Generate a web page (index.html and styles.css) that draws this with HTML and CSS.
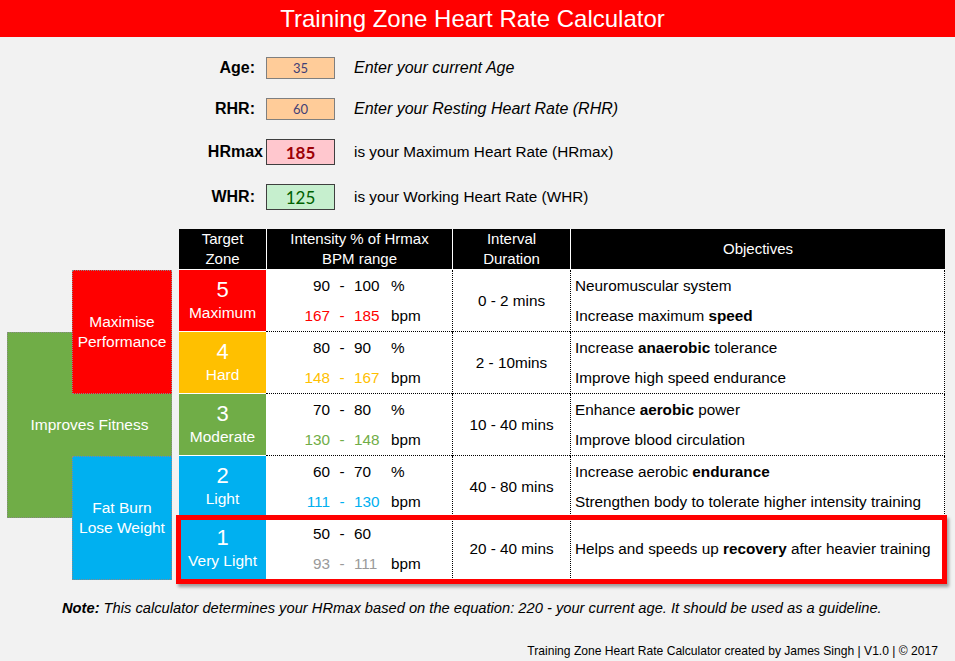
FILE: index.html
```html
<!DOCTYPE html>
<html lang="en">
<head>
<meta charset="utf-8">
<title>Training Zone Heart Rate Calculator</title>
<link rel="stylesheet" href="styles.css">
</head>
<body>
<header class="title-bar"><h1>Training Zone Heart Rate Calculator</h1></header>

<section class="inputs">
  <div class="in-row short">
    <span class="in-label">Age:</span>
    <span class="in-box entry">35</span>
    <span class="in-desc hint">Enter your current Age</span>
  </div>
  <div class="in-row short">
    <span class="in-label">RHR:</span>
    <span class="in-box entry">60</span>
    <span class="in-desc hint">Enter your Resting Heart Rate (RHR)</span>
  </div>
  <div class="in-row tall">
    <span class="in-label wide">HRmax</span>
    <span class="in-box bad">185</span>
    <span class="in-desc">is your Maximum Heart Rate (HRmax)</span>
  </div>
  <div class="in-row tall">
    <span class="in-label">WHR:</span>
    <span class="in-box good">125</span>
    <span class="in-desc">is your Working Heart Rate (WHR)</span>
  </div>
</section>

<section class="zones">
  <div class="groups">
    <div class="grp grp-max">Maximise<br>Performance</div>
    <div class="grp grp-fit">Improves Fitness</div>
    <div class="grp grp-fat">Fat Burn<br>Lose Weight</div>
  </div>

  <div class="ztable">
    <div class="th">Target<br>Zone</div>
    <div class="th sep">Intensity % of Hrmax<br>BPM range</div>
    <div class="th sep">Interval<br>Duration</div>
    <div class="th sep">Objectives</div>

    <div class="zone z5"><span class="zn">5</span><span class="zl">Maximum</span></div>
    <div class="inten c5">
      <span class="n1">90</span><span class="d">-</span><span class="n2">100</span><span class="u">%</span>
      <span class="n1 col">167</span><span class="d col">-</span><span class="n2 col">185</span><span class="u">bpm</span>
    </div>
    <div class="interval">0 - 2 mins</div>
    <div class="obj"><span>Neuromuscular system</span><span>Increase maximum <b>speed</b></span></div>

    <div class="zone z4"><span class="zn">4</span><span class="zl">Hard</span></div>
    <div class="inten c4">
      <span class="n1">80</span><span class="d">-</span><span class="n2">90</span><span class="u">%</span>
      <span class="n1 col">148</span><span class="d col">-</span><span class="n2 col">167</span><span class="u">bpm</span>
    </div>
    <div class="interval">2 - 10mins</div>
    <div class="obj"><span>Increase <b>anaerobic</b> tolerance</span><span>Improve high speed endurance</span></div>

    <div class="zone z3"><span class="zn">3</span><span class="zl">Moderate</span></div>
    <div class="inten c3">
      <span class="n1">70</span><span class="d">-</span><span class="n2">80</span><span class="u">%</span>
      <span class="n1 col">130</span><span class="d col">-</span><span class="n2 col">148</span><span class="u">bpm</span>
    </div>
    <div class="interval">10 - 40 mins</div>
    <div class="obj"><span>Enhance <b>aerobic</b> power</span><span>Improve blood circulation</span></div>

    <div class="zone z2"><span class="zn">2</span><span class="zl">Light</span></div>
    <div class="inten c2">
      <span class="n1">60</span><span class="d">-</span><span class="n2">70</span><span class="u">%</span>
      <span class="n1 col">111</span><span class="d col">-</span><span class="n2 col">130</span><span class="u">bpm</span>
    </div>
    <div class="interval">40 - 80 mins</div>
    <div class="obj"><span>Increase aerobic <b>endurance</b></span><span>Strengthen body to tolerate higher intensity training</span></div>

    <div class="zone z1"><span class="zn">1</span><span class="zl">Very Light</span></div>
    <div class="inten c1">
      <span class="n1">50</span><span class="d">-</span><span class="n2">60</span><span class="u"></span>
      <span class="n1 col">93</span><span class="d col">-</span><span class="n2 col">111</span><span class="u">bpm</span>
    </div>
    <div class="interval">20 - 40 mins</div>
    <div class="obj single"><span>Helps and speeds up <b>recovery</b> after heavier training</span></div>

    <div class="highlight"></div>
  </div>
</section>

<p class="note"><b>Note:</b> This calculator determines your HRmax based on the equation: 220 - your current age. It should be used as a guideline.</p>
<p class="credit">Training Zone Heart Rate Calculator created by James Singh | V1.0 | © 2017</p>
</body>
</html>
```

FILE: styles.css
```css
* { box-sizing: border-box; }
html, body { margin: 0; padding: 0; }
body {
  width: 955px;
  height: 661px;
  background: #f2f2f2;
  font-family: "Liberation Sans", Arial, sans-serif;
  color: #000;
  overflow: hidden;
}

.title-bar {
  height: 37px;
  background: #ff0000;
  display: flex;
  align-items: center;
  justify-content: center;
  padding-right: 10px;
}
.title-bar h1 {
  margin: 0;
  font-weight: normal;
  font-size: 24px;
  color: #fff;
  line-height: 37px;
}

/* inputs */
.inputs {
  padding-top: 20px;
  padding-left: 185px;
  display: flex;
  flex-direction: column;
  gap: 19px;
}
.in-row {
  display: flex;
  align-items: center;
}
.in-row.short { height: 22px; }
.in-row.tall { height: 26px; }
.in-label {
  width: 70px;
  text-align: right;
  font-weight: bold;
  font-size: 16px;
  white-space: nowrap;
}
.in-label.wide { width: 78px; }
.in-box {
  margin-left: 11px;
  width: 69px;
  height: 100%;
  display: flex;
  align-items: center;
  justify-content: center;
  font-family: Lato, "Open Sans", sans-serif;
  border: 1px solid #7f7f7f;
}
.in-label.wide + .in-box { margin-left: 3px; }
.entry { background: #ffcc99; color: #3f3f76; font-size: 13px; }
.bad { background: #ffc7ce; color: #9c0006; font-size: 17px; font-weight: bold; border-color: #3f3f3f; }
.good { background: #c6efce; color: #006100; font-size: 17px; border-color: #3f3f3f; }
.in-desc {
  margin-left: 19px;
  font-size: 15.3px;
  white-space: nowrap;
}
.hint { font-style: italic; font-size: 16px; }

/* zones */
.zones {
  margin-top: 19px;
  display: flex;
  align-items: flex-start;
  padding-left: 7px;
  gap: 7px;
}
.groups {
  margin-top: 41px;
  display: grid;
  grid-template-columns: 65px 100px;
  grid-template-rows: 62px 62px 62px 62px 62px;
  color: #fff;
  font-size: 15.5px;
  line-height: 20px;
  text-align: center;
}
.grp {
  display: flex;
  align-items: center;
  justify-content: center;
  border: 1px dotted #8a8a8a;
}
.grp-max { grid-column: 2; grid-row: 1 / 3; background: #ff0000; z-index: 2; }
.grp-fit { grid-column: 1 / 3; grid-row: 2 / 5; background: #70ad47; z-index: 1; }
.grp-fat { grid-column: 2; grid-row: 4 / 6; background: #00b0f0; z-index: 2; }

.ztable {
  position: relative;
  display: grid;
  grid-template-columns: 87px 186px 118px 375px;
  grid-template-rows: 41px repeat(5, 62px);
  font-size: 15.3px;
}
.th {
  background: #000;
  color: #fff;
  text-align: center;
  line-height: 20px;
  display: flex;
  align-items: center;
  justify-content: center;
  border-bottom: 1px solid #fff;
  font-size: 15px;
}
.th.sep { border-left: 1px solid #fff; }

.zone {
  display: flex;
  flex-direction: column;
  align-items: center;
  justify-content: center;
  color: #fff;
  border-bottom: 1px solid #fff;
}
.zn { font-size: 22px; line-height: 24px; }
.zl { font-size: 15.5px; line-height: 22px; }
.z5 { background: #ff0000; }
.z4 { background: #ffc000; }
.z3 { background: #70ad47; }
.z2, .z1 { background: #00b0f0; }

.inten, .interval, .obj {
  background: #fff;
  border-bottom: 1px dotted #000;
}
.inten {
  display: grid;
  grid-template-columns: 64px 24px 37px 1fr;
  grid-template-rows: 31px 30px;
  align-items: center;
}
.n1 { text-align: right; }
.d { text-align: center; }
.n2 { text-align: left; }
.c5 .col { color: #ff0000; }
.c4 .col { color: #ffc000; }
.c3 .col { color: #70ad47; }
.c2 .col { color: #00b0f0; }
.c1 .col { color: #9a9a9a; }

.interval {
  display: flex;
  align-items: center;
  justify-content: center;
  border-left: 1px dotted #000;
}
.obj {
  display: grid;
  grid-template-rows: 31px 30px;
  align-items: center;
  padding-left: 4px;
  border-left: 1px dotted #000;
  border-right: 1px dotted #000;
  white-space: nowrap;
}
.obj.single { grid-template-rows: 61px; }

.highlight {
  position: absolute;
  left: -3px;
  top: 286px;
  width: 771px;
  height: 69px;
  border: 5px solid #ff0000;
  box-shadow: 2px 3px 3px rgba(0, 0, 0, 0.35);
  pointer-events: none;
}

.note {
  margin: 20px 0 0 62px;
  font-size: 14.7px;
  font-style: italic;
  line-height: 17px;
  white-space: nowrap;
}
.credit {
  margin: 27px 17px 0 0;
  text-align: right;
  font-size: 12.1px;
  line-height: 14px;
  white-space: nowrap;
}
```
